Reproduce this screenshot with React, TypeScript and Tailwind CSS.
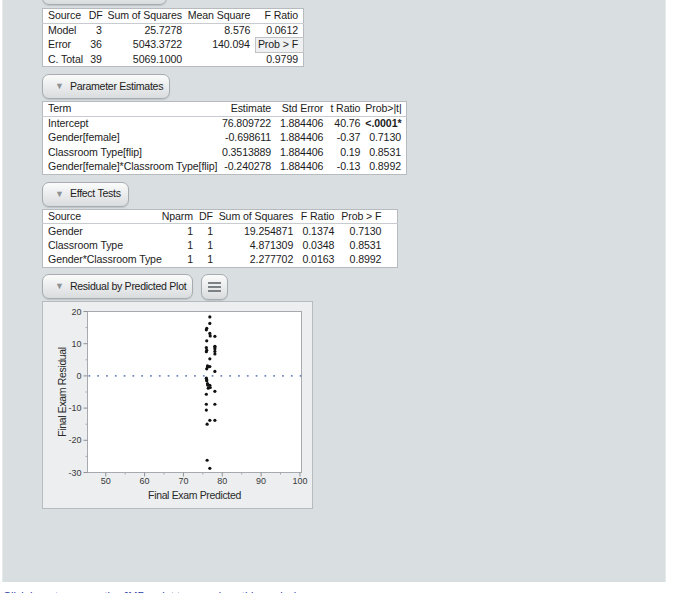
import React from 'react';

// JMP style report: fit least squares output with residual plot

const font = "font-['Liberation_Sans',Arial,Helvetica,sans-serif]";

function OutlineButton({ label, className = '' }: { label: string; className?: string }) {
  return (
    <div
      className={`flex h-[25px] items-center whitespace-nowrap rounded-[7px] border border-[#a7acb0] bg-gradient-to-b from-[#fbfbfb] to-[#d9dcde] pl-[12px] shadow-[0_1px_1px_rgba(0,0,0,0.12)] ${className}`}
    >
      <span className="mr-[6px] text-[9px] leading-none text-[#8d9296]">▼</span>
      <span className="text-[10.6px] tracking-[-0.3px] text-[#1d1d1d]">{label}</span>
    </div>
  );
}

function MenuButton() {
  return (
    <div className="ml-[8px] flex h-[26px] w-[27px] flex-col items-center justify-center gap-[2px] rounded-[7px] border border-[#a7acb0] bg-gradient-to-b from-[#fbfbfb] to-[#d9dcde] shadow-[0_1px_1px_rgba(0,0,0,0.12)]">
      <span className="h-[2px] w-[13px] bg-[#7c8185]" />
      <span className="h-[2px] w-[13px] bg-[#7c8185]" />
      <span className="h-[2px] w-[13px] bg-[#7c8185]" />
    </div>
  );
}

type Cell = { v: string; bold?: boolean; boxed?: boolean };

function ReportTable({
  widths,
  header,
  rows,
  align,
  className = '',
}: {
  widths: number[];
  header: string[];
  rows: (string | Cell)[][];
  align: ('l' | 'r')[];
  className?: string;
}) {
  const total = widths.reduce((a, b) => a + b, 0);
  return (
    <table
      className={`table-fixed border-collapse border border-[#b7bbbf] bg-white text-[10.6px] tracking-[-0.1px] text-[#1c1c1c] ${className}`}
      style={{ width: total + 2 }}
    >
      <colgroup>
        {widths.map((w, i) => (
          <col key={i} style={{ width: w }} />
        ))}
      </colgroup>
      <thead>
        <tr className="h-[14.5px] border-b border-[#c8ccd0]">
          {header.map((h, i) => (
            <th
              key={i}
              className={`whitespace-nowrap p-0 font-normal leading-[13px] ${
                align[i] === 'l' ? 'pl-[5px] text-left' : 'pr-[5px] text-right'
              }`}
            >
              {h}
            </th>
          ))}
        </tr>
      </thead>
      <tbody>
        {rows.map((r, ri) => (
          <tr key={ri} className="h-[14.5px]">
            {r.map((c, ci) => {
              const cell: Cell = typeof c === 'string' ? { v: c } : c;
              return (
                <td
                  key={ci}
                  className={`whitespace-nowrap p-0 leading-[13px] ${
                    align[ci] === 'l' ? 'pl-[5px] text-left' : 'pr-[5px] text-right'
                  } ${cell.bold ? 'font-bold' : ''} ${
                    cell.boxed ? 'border border-[#bfc3c6] bg-[#eef0f1]' : ''
                  }`}
                >
                  {cell.v}
                </td>
              );
            })}
          </tr>
        ))}
      </tbody>
    </table>
  );
}

const points: [number, number][] = [
  [76.0, 14.8], [75.9, 14.3], [76.0, 10.9], [75.9, 8.8], [76.0, 8.0], [75.9, 7.5],
  [76.2, 2.8], [76.0, 2.2], [76.2, 3.1], [75.9, -0.7], [76.0, -1.5], [76.2, -2.4],
  [76.0, -1.2], [76.3, -2.9], [75.9, -5.7], [75.9, -8.8], [75.9, -10.6], [76.1, -15.0],
  [76.1, -26.2], [76.4, -3.8],
  [76.8, 18.3], [76.8, 16.3], [76.8, 13.2], [76.9, 12.4], [76.8, 5.3], [76.8, -2.9],
  [76.9, -3.6], [76.8, -13.8], [76.8, -28.7], [76.8, 2.9],
  [78.1, 12.3], [78.1, 9.2], [78.1, 8.4], [78.1, 7.6], [78.1, 6.8], [78.1, 1.4],
  [78.1, -4.8], [78.1, -8.8], [78.1, -13.8], [78.1, 9.0],
];

function ResidualPlot() {
  const PL = 44.5;
  const PR = 258.5;
  const PT = 9.5;
  const PB = 170.5;
  const x0 = 45.3;
  const x1 = 100.4;
  const sx = (v: number) => PL + ((v - x0) * (PR - PL)) / (x1 - x0);
  const sy = (v: number) => PT + ((20 - v) * (PB - PT)) / 50;

  const yMajor = [20, 10, 0, -10, -20, -30];
  const yMinor = [15, 5, -5, -15, -25];
  const xMajor = [50, 60, 70, 80, 90, 100];
  const xMinor = [55, 65, 75, 85, 95];

  return (
    <div className="mt-[1px] h-[208px] w-[271px] border border-[#b7bbbf] bg-[#eceef0]">
      <svg width="269" height="206" viewBox="0 0 269 206">
        <rect x={PL} y={PT} width={PR - PL} height={PB - PT} fill="#ffffff" stroke="#a6aaae" strokeWidth="1" />
        {yMajor.map((v) => (
          <g key={v}>
            <line x1={PL - 4} x2={PL} y1={sy(v)} y2={sy(v)} stroke="#8e9296" />
            <text x={PL - 6} y={sy(v) + 3} fontSize="9" textAnchor="end" fill="#3a3a3a" fontFamily="Liberation Sans, Arial, sans-serif">
              {v}
            </text>
          </g>
        ))}
        {yMinor.map((v) => (
          <line key={v} x1={PL - 2} x2={PL} y1={sy(v)} y2={sy(v)} stroke="#a6aaae" />
        ))}
        {xMajor.map((v) => (
          <g key={v}>
            <line x1={sx(v)} x2={sx(v)} y1={PB} y2={PB + 4} stroke="#8e9296" />
            <text x={sx(v)} y={PB + 11} fontSize="9" textAnchor="middle" fill="#3a3a3a" fontFamily="Liberation Sans, Arial, sans-serif">
              {v}
            </text>
          </g>
        ))}
        {xMinor.map((v) => (
          <line key={v} x1={sx(v)} x2={sx(v)} y1={PB} y2={PB + 2} stroke="#a6aaae" />
        ))}
        <line
          x1={PL + 1}
          x2={PR}
          y1={sy(0)}
          y2={sy(0)}
          stroke="#6f86c0"
          strokeWidth="1.7"
          strokeDasharray="1.7 7.1"
        />
        {points.map(([px, py], i) => (
          <circle key={i} cx={sx(px)} cy={sy(py)} r="1.6" fill="#111111" />
        ))}
        <text
          x={(PL + PR) / 2}
          y={197}
          fontSize="10.5"
          letterSpacing="-0.35"
          textAnchor="middle"
          fill="#2a2a2a"
          fontFamily="Liberation Sans, Arial, sans-serif"
        >
          Final Exam Predicted
        </text>
        <text
          transform={`translate(23 ${(PT + PB) / 2}) rotate(-90)`}
          fontSize="10.5"
          letterSpacing="-0.35"
          textAnchor="middle"
          fill="#2a2a2a"
          fontFamily="Liberation Sans, Arial, sans-serif"
        >
          Final Exam Residual
        </text>
      </svg>
    </div>
  );
}

export default function App() {
  return (
    <div className={`h-[593px] w-[700px] overflow-hidden bg-white ${font}`}>
      <div className="ml-[2px] h-[582px] w-[664px] overflow-hidden border-l border-r border-[#e6e9ea] bg-[#d9dfe1] pl-[39px]">
        {/* Analysis of Variance (scrolled, header button cut off) */}
        <div className="-mt-[20px] h-[25px] w-[125px] rounded-[7px] border border-[#a7acb0] bg-gradient-to-b from-[#fbfbfb] to-[#d9dcde] shadow-[0_1px_1px_rgba(0,0,0,0.12)]" />
        <ReportTable
          className="mt-[3px]"
          widths={[46, 18, 80, 68, 48]}
          header={['Source', 'DF', 'Sum of Squares', 'Mean Square', 'F Ratio']}
          align={['l', 'r', 'r', 'r', 'r']}
          rows={[
            ['Model', '3', '25.7278', '8.576', '0.0612'],
            ['Error', '36', '5043.3722', '140.094', { v: 'Prob > F', boxed: true }],
            ['C. Total', '39', '5069.1000', '', '0.9799'],
          ]}
        />

        <OutlineButton label="Parameter Estimates" className="mt-[7px] w-[128px]" />
        <ReportTable
          className="mt-[2px]"
          widths={[170, 63, 52, 37, 41]}
          header={['Term', 'Estimate', 'Std Error', 't Ratio', 'Prob>|t|']}
          align={['l', 'r', 'r', 'r', 'r']}
          rows={[
            ['Intercept', '76.809722', '1.884406', '40.76', { v: '<.0001*', bold: true }],
            ['Gender[female]', '-0.698611', '1.884406', '-0.37', '0.7130'],
            ['Classroom Type[flip]', '0.3513889', '1.884406', '0.19', '0.8531'],
            ['Gender[female]*Classroom Type[flip]', '-0.240278', '1.884406', '-0.13', '0.8992'],
          ]}
        />

        <OutlineButton label="Effect Tests" className="mt-[7px] w-[87px]" />
        <ReportTable
          className="mt-[2px]"
          widths={[118, 37, 20, 80, 41, 47, 11]}
          header={['Source', 'Nparm', 'DF', 'Sum of Squares', 'F Ratio', 'Prob > F', '']}
          align={['l', 'r', 'r', 'r', 'r', 'r', 'r']}
          rows={[
            ['Gender', '1', '1', '19.254871', '0.1374', '0.7130', ''],
            ['Classroom Type', '1', '1', '4.871309', '0.0348', '0.8531', ''],
            ['Gender*Classroom Type', '1', '1', '2.277702', '0.0163', '0.8992', ''],
          ]}
        />

        <div className="mt-[6px] flex items-center">
          <OutlineButton label="Residual by Predicted Plot" className="w-[151px]" />
          <MenuButton />
        </div>
        <ResidualPlot />
      </div>
      <div className="mt-[7px] pl-[3px] text-[11px] leading-[14px] text-[#2b3ea8]">
        Click here to access the JMP script to reproduce this analysis.
      </div>
    </div>
  );
}
